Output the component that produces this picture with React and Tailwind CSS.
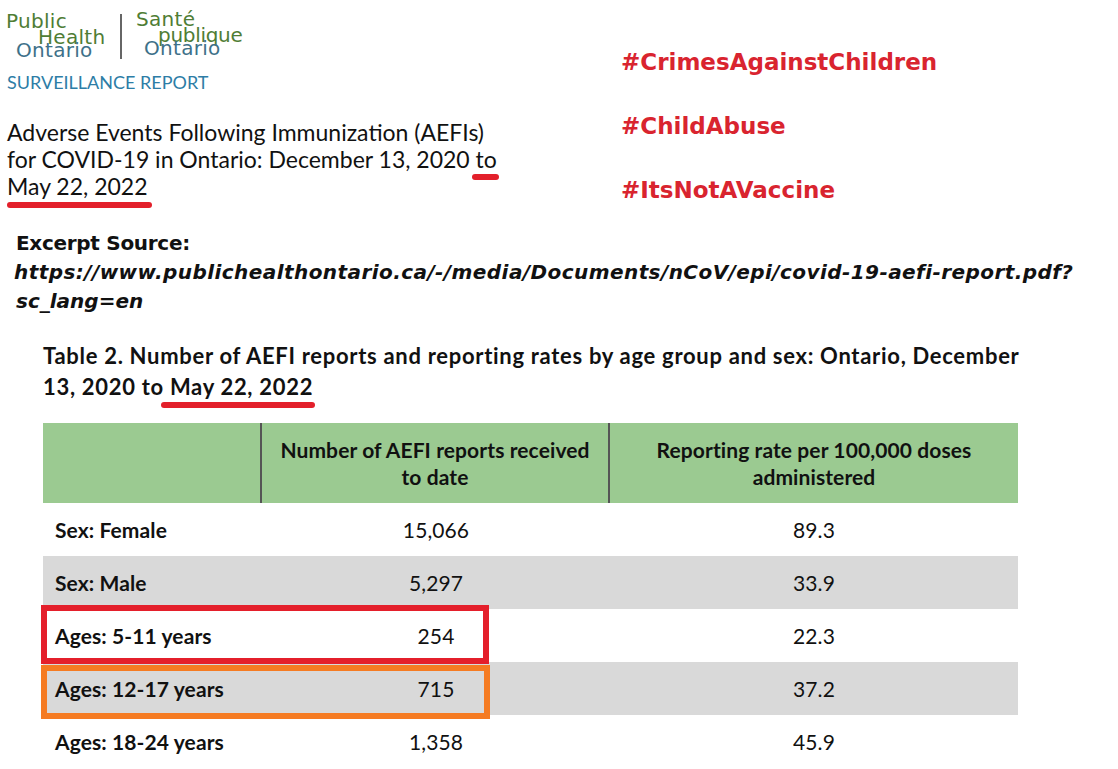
import React from 'react';

const calibri = { fontFamily: 'Lato, "Open Sans", sans-serif' };
const gothic = { fontFamily: '"DejaVu Sans", Verdana, sans-serif' };

const rows = [
  { label: 'Sex: Female', count: '15,066', rate: '89.3', shade: false },
  { label: 'Sex: Male', count: '5,297', rate: '33.9', shade: true },
  { label: 'Ages: 5-11 years', count: '254', rate: '22.3', shade: false },
  { label: 'Ages: 12-17 years', count: '715', rate: '37.2', shade: true },
  { label: 'Ages: 18-24 years', count: '1,358', rate: '45.9', shade: false },
];

// red marker stroke under a piece of text
const Marked = ({ children, className }) => (
  <span className="relative">
    {children}
    <span className={'absolute h-[6px] rounded-full bg-[#e3202b] ' + className} />
  </span>
);

const Logo = () => (
  <div className="flex items-start pt-[10px] pl-[6px]" style={gothic}>
    <div className="text-[20px] leading-[14px] tracking-[0.3px] w-[108px]">
      <div className="text-[#4f7d35] pt-[4px]">Public</div>
      <div className="text-[#4f7d35] pl-[32px] pt-[2px]">Health</div>
      <div className="text-[#3e7189] pl-[10px] -mt-[1px]">Ontario</div>
    </div>
    <div className="w-[2px] h-[45px] bg-[#666] mt-[4px] ml-[6px]" />
    <div className="text-[20px] leading-[14px] tracking-[0.3px] pl-[14px]">
      <div className="text-[#4f7d35] pt-[2px]">Santé</div>
      <div className="text-[#4f7d35] pl-[22px] pt-[2px] tracking-[-0.3px]">publique</div>
      <div className="text-[#3e7189] pl-[8px] -mt-[1px]">Ontario</div>
    </div>
  </div>
);

export default function App() {
  return (
    <div className="w-[1118px] h-[769px] bg-white overflow-hidden text-[#111]">
      {/* top part */}
      <div className="flex h-[222px]">
        <div className="w-[614px]">
          <Logo />
          <div className="pl-[7px] pt-[13px] text-[18px] leading-[20px] text-[#2d7da6]" style={calibri}>
            SURVEILLANCE REPORT
          </div>
          <div className="pl-[7px] pt-[27px] text-[23px] leading-[27px]" style={calibri}>
            <div>Adverse Events Following Immunization (AEFIs)</div>
            <div>
              for COVID-19 in Ontario: December 13, 2020{' '}
              <Marked className="left-[-4px] right-[-2px] top-[29px]">to</Marked>
            </div>
            <div>
              <Marked className="left-0 right-[-4px] top-[30px]">May 22, 2022</Marked>
            </div>
          </div>
        </div>
        <div className="pt-[30px] pl-[7px] text-[#d9242f] font-bold text-[23px] leading-[64px]" style={gothic}>
          <div>#CrimesAgainstChildren</div>
          <div>#ChildAbuse</div>
          <div>#ItsNotAVaccine</div>
        </div>
      </div>

      {/* source */}
      <div className="pl-[16px] font-bold text-[20px] leading-[29px] mt-[7px]" style={gothic}>
        <div className="tracking-[-0.3px]">Excerpt Source:</div>
        <div className="italic tracking-[0.43px] -ml-[2px]">
          https://www.publichealthontario.ca/-/media/Documents/nCoV/epi/covid-19-aefi-report.pdf?
        </div>
        <div className="italic">sc_lang=en</div>
      </div>

      {/* table title */}
      <div className="pl-[43px] pt-[24px] font-bold text-[22px] leading-[31px] tracking-[0.7px]" style={calibri}>
        <div>Table 2. Number of AEFI reports and reporting rates by age group and sex: Ontario, December</div>
        <div>
          13, 2020 to{' '}
          <Marked className="left-[-9px] right-[-2px] top-[29px]">May 22, 2022</Marked>
        </div>
      </div>

      {/* table */}
      <div className="relative ml-[43px] mt-[21px] w-[975px] text-[21px] tracking-[0.1px]" style={calibri}>
        <div className="flex h-[80px] bg-[#9bca91] font-bold leading-[27px]">
          <div className="w-[219px] border-r-2 border-[#555]" />
          <div className="w-[348px] border-r-2 border-[#555] flex flex-col justify-center items-center text-center">
            <div>Number of AEFI reports received</div>
            <div>to date</div>
          </div>
          <div className="flex-1 flex flex-col justify-center items-center text-center">
            <div>Reporting rate per 100,000 doses</div>
            <div>administered</div>
          </div>
        </div>
        {rows.map(r => (
          <div
            key={r.label}
            className={'flex h-[53px] items-center ' + (r.shade ? 'bg-[#d9d9d9]' : 'bg-white')}
          >
            <div className="w-[219px] pl-[12px] font-bold">{r.label}</div>
            <div className="w-[348px] text-center">{r.count}</div>
            <div className="flex-1 text-center">{r.rate}</div>
          </div>
        ))}

        {/* highlight boxes */}
        <div className="absolute left-[-2px] top-[182px] w-[448px] h-[59px] border-[6px] border-[#e41f2b]" />
        <div className="absolute left-[-2px] top-[242px] w-[449px] h-[54px] border-[6px] border-[#f57b22]" />
      </div>
    </div>
  );
}
